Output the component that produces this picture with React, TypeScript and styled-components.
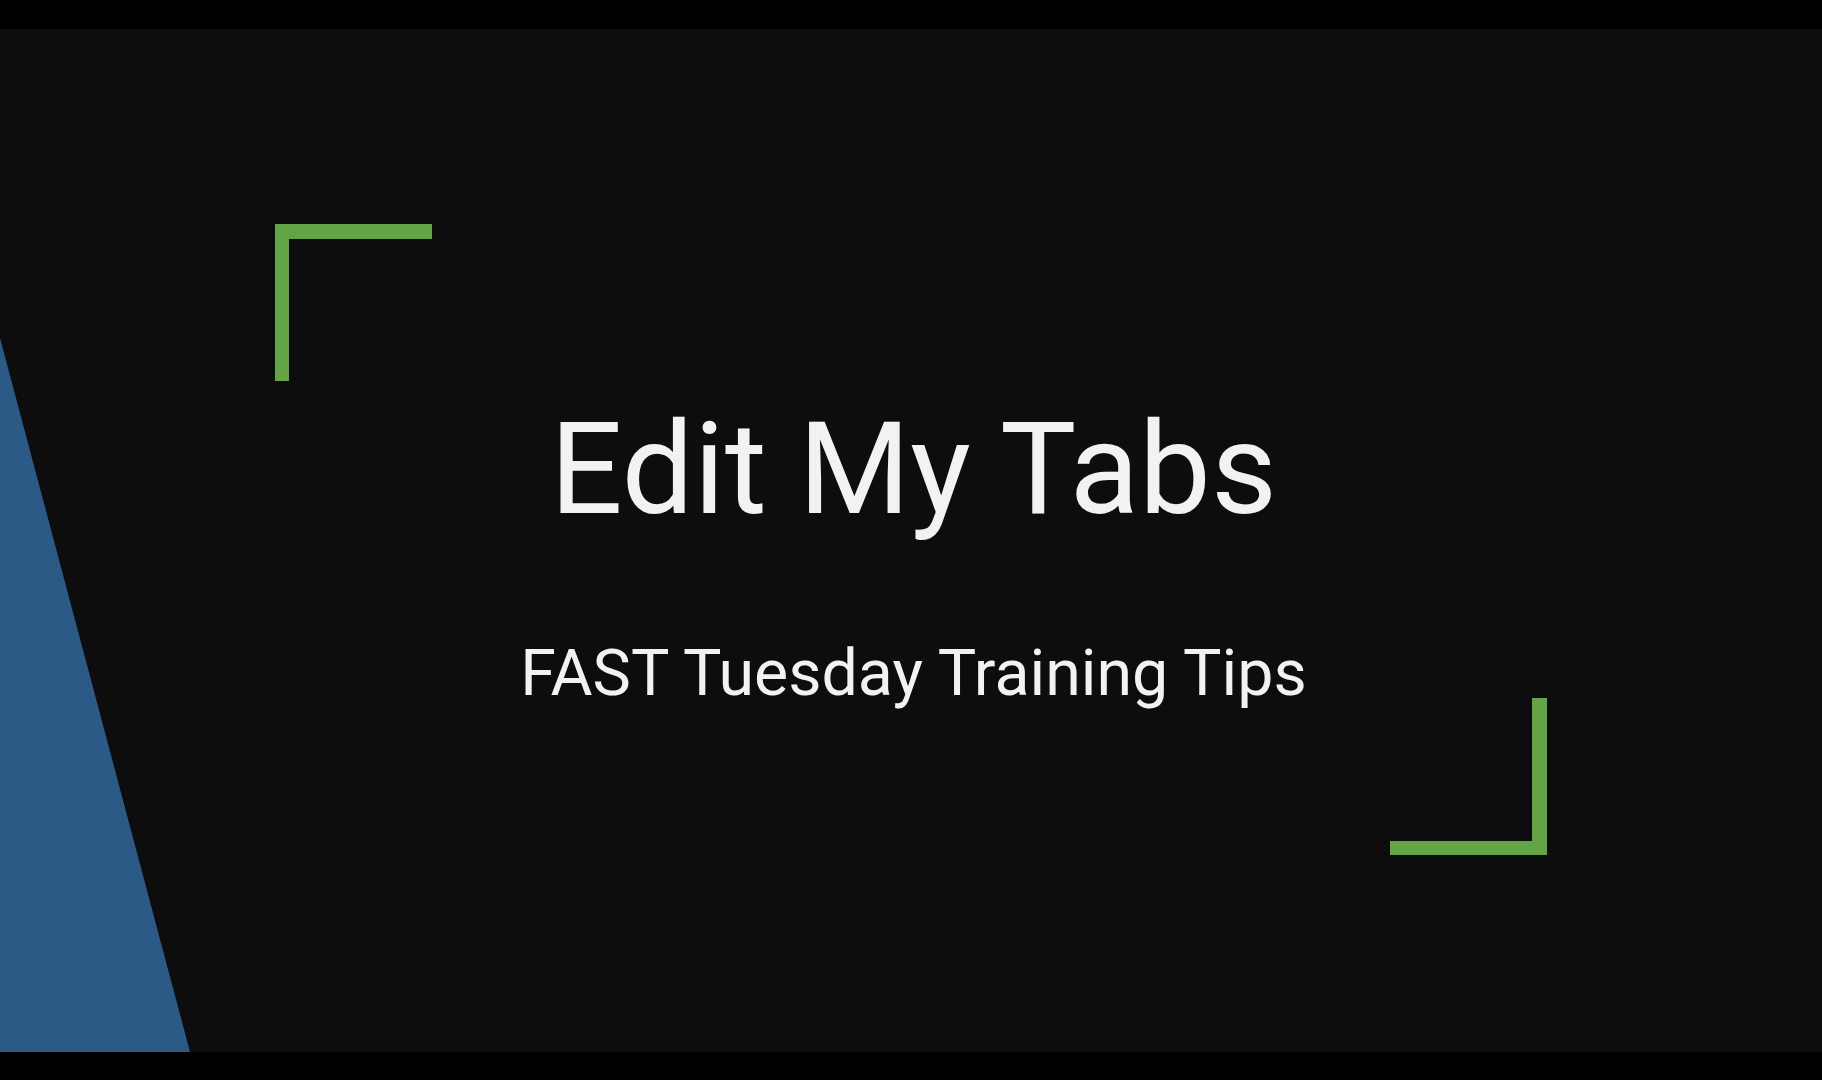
import React from 'react';
import styled, { createGlobalStyle } from 'styled-components';

// Estilos globais: fundo preto e fonte sem serifa
const GlobalStyle = createGlobalStyle`
  html, body {
    margin: 0;
    padding: 0;
    background: #000;
  }
  body {
    font-family: Roboto, 'Liberation Sans', Arial, sans-serif;
  }
`;

// Tela inteira, com faixas pretas em cima e embaixo (letterbox)
const Screen = styled.div`
  width: 1822px;
  height: 1080px;
  display: flex;
  flex-direction: column;
  background: #000;
  overflow: hidden;
`;

const LetterBar = styled.div<{ $h: number }>`
  height: ${(p) => p.$h}px;
  flex: 0 0 auto;
  background: #000;
`;

// Área do slide
const Slide = styled.section`
  position: relative;
  flex: 1 1 auto;
  background: #0d0d0d;
  display: flex;
  flex-direction: column;
  align-items: center;
  padding: 376px 0 0 5px;
  box-sizing: border-box;
  overflow: hidden;
`;

// Triângulo azul no canto inferior esquerdo
const BlueWedge = styled.div`
  position: absolute;
  left: 0;
  bottom: 0;
  width: 190px;
  height: 714px;
  background: #2b5a86;
  clip-path: polygon(0 0, 100% 100%, 0 100%);
`;

// Cantoneiras verdes
const Bracket = styled.div<{ $corner: 'tl' | 'br' }>`
  position: absolute;
  width: 157px;
  height: 157px;
  box-sizing: border-box;
  border: 0 solid #63a545;
  ${(p) =>
    p.$corner === 'tl'
      ? `left: 275px; top: 195px; border-top-width: 15px; border-left-width: 14px;`
      : `right: 275px; bottom: 197px; border-bottom-width: 14px; border-right-width: 15px;`}
`;

const Title = styled.h1`
  margin: 0;
  color: #f2f2f2;
  font-weight: 400;
  font-size: 128px;
  line-height: 128px;
  white-space: nowrap;
  z-index: 1;
`;

const Subtitle = styled.p`
  margin: 108px 0 0 0;
  color: #f2f2f2;
  font-weight: 400;
  font-size: 64.5px;
  line-height: 64.5px;
  white-space: nowrap;
  z-index: 1;
`;

export default function App() {
  return (
    <>
      <GlobalStyle />
      <Screen>
        <LetterBar $h={29} />
        <Slide>
          <BlueWedge />
          <Bracket $corner="tl" />
          <Bracket $corner="br" />
          <Title>Edit My Tabs</Title>
          <Subtitle>FAST Tuesday Training Tips</Subtitle>
        </Slide>
        <LetterBar $h={28} />
      </Screen>
    </>
  );
}
